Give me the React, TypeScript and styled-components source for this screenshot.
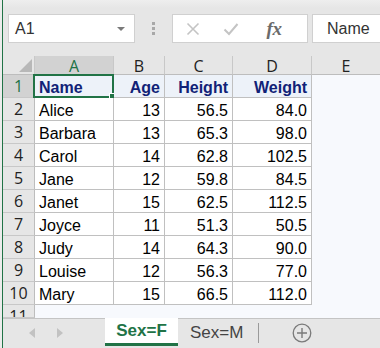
import { Fragment } from 'react'
import styled, { createGlobalStyle } from 'styled-components'

const GREEN = '#217346'

const GlobalStyle = createGlobalStyle`
  html, body {
    margin: 0;
    padding: 0;
    background: #e6e6e6;
  }
  * { box-sizing: border-box; }
`

const Frame = styled.div`
  width: 380px;
  height: 348px;
  overflow: hidden;
  padding-left: 2px;
  background: #ececec;
`

const Window = styled.div`
  height: 100%;
  border-left: 1px solid ${GREEN};
  display: flex;
  flex-direction: column;
  background: #e6e6e6;
  font-family: "Liberation Sans", Arial, sans-serif;
`

const Toolbar = styled.div`
  height: 56px;
  flex: none;
  display: flex;
  align-items: flex-start;
  padding-top: 14px;
  padding-left: 5px;
  background: linear-gradient(#eeeeee 0, #e6e6e6 8px);
`

const NameBox = styled.div`
  width: 127px;
  height: 29px;
  background: #fff;
  border: 1px solid #d0d0d0;
  display: flex;
  align-items: center;
  justify-content: space-between;
  padding: 0 9px 0 6px;
  font-size: 16px;
  color: #333;
`

const Caret = styled.span`
  width: 0;
  height: 0;
  border-left: 4px solid transparent;
  border-right: 4px solid transparent;
  border-top: 4px solid #7a7a7a;
`

const Grip = styled.div`
  width: 37px;
  height: 29px;
  display: flex;
  flex-direction: column;
  align-items: center;
  justify-content: center;
  gap: 2px;
  span {
    width: 3px;
    height: 3px;
    background: #a8a8a8;
  }
`

const FormulaButtons = styled.div`
  width: 136px;
  height: 29px;
  background: #fff;
  border: 1px solid #d0d0d0;
  display: flex;
  align-items: center;
  padding-left: 11px;
`

const IconSlot = styled.span<{ $w: number }>`
  width: ${p => p.$w}px;
  display: flex;
  align-items: center;
  justify-content: center;
`

const Fx = styled.span`
  font-family: "Liberation Serif", "Times New Roman", serif;
  font-style: italic;
  font-weight: bold;
  font-size: 19px;
  color: #6b6b6b;
  letter-spacing: -0.5px;
`

const FormulaInput = styled.div`
  flex: 1;
  height: 29px;
  margin-left: 4px;
  background: #fff;
  border: 1px solid #d0d0d0;
  border-right: none;
  display: flex;
  align-items: center;
  padding-left: 14px;
  font-size: 16px;
  color: #333;
`

const Sheet = styled.div`
  flex: 1;
  display: grid;
  grid-template-columns: 32px 79px 51px 68px 79px 1fr;
  grid-template-rows: 19px repeat(10, 23px) 1fr;
  overflow: hidden;
  background: #f7f9fd;
`

const Corner = styled.div`
  background: #e6e6e6;
  border-right: 1px solid #c8c8c8;
  border-bottom: 1px solid #bdbdbd;
  position: relative;
  &::after {
    content: '';
    position: absolute;
    right: 2px;
    bottom: 2px;
    width: 13px;
    height: 13px;
    background: #b8b8b8;
    clip-path: polygon(100% 0, 100% 100%, 0 100%);
  }
`

const ColHead = styled.div<{ $sel?: boolean; $last?: boolean }>`
  background: ${p => (p.$sel ? '#d2d2d2' : '#e6e6e6')};
  color: ${p => (p.$sel ? GREEN : '#222')};
  border-right: ${p => (p.$last ? 'none' : '1px solid #c8c8c8')};
  border-bottom: 1px solid #bdbdbd;
  font-family: "Open Sans", "Liberation Sans", sans-serif;
  font-size: 16px;
  line-height: 20px;
  text-align: center;
`

const RowHead = styled.div<{ $sel?: boolean }>`
  background: ${p => (p.$sel ? '#d2d2d2' : '#e6e6e6')};
  color: ${p => (p.$sel ? GREEN : '#222')};
  border-right: 1px solid #bdbdbd;
  border-bottom: 1px solid #c8c8c8;
  font-family: "Open Sans", "Liberation Sans", sans-serif;
  font-size: 16px;
  line-height: 21px;
  padding-top: 1px;
  text-align: center;
  overflow: hidden;
`

const Cell = styled.div<{ $head?: boolean; $num?: boolean; $active?: boolean }>`
  position: relative;
  background: ${p => (p.$head ? '#edf2f9' : '#fff')};
  color: ${p => (p.$head ? '#112277' : '#000')};
  font-weight: ${p => (p.$head ? 'bold' : 'normal')};
  text-align: ${p => (p.$num ? 'right' : 'left')};
  border-right: 1px solid #c0c0c0;
  border-bottom: 1px solid #c0c0c0;
  font-size: 16px;
  line-height: 21px;
  padding: 2px 4px 0 4px;
  white-space: nowrap;
  ${p =>
    p.$active &&
    `
    &::before {
      content: '';
      position: absolute;
      left: -2px;
      top: -1px;
      right: -1px;
      bottom: -1px;
      border: 2px solid ${GREEN};
    }
    &::after {
      content: '';
      position: absolute;
      right: -4px;
      bottom: -4px;
      width: 6px;
      height: 6px;
      background: ${GREEN};
      border: 1px solid #fff;
    }
  `}
`

const Blank = styled.div``

const TabBar = styled.div`
  height: 30px;
  flex: none;
  display: flex;
  align-items: stretch;
  background: #e6e6e6;
  border-top: 1px solid #c4c4c4;
`

const Nav = styled.div`
  width: 102px;
  display: flex;
  align-items: center;
  padding-left: 26px;
  gap: 22px;
  padding-bottom: 2px;
`

const Arrow = styled.span<{ $dir: 'left' | 'right' }>`
  width: 0;
  height: 0;
  border-top: 5px solid transparent;
  border-bottom: 5px solid transparent;
  ${p =>
    p.$dir === 'left'
      ? 'border-right: 6px solid #c2c2c2;'
      : 'border-left: 6px solid #c2c2c2;'}
`

const Tab = styled.div<{ $active?: boolean }>`
  width: ${p => (p.$active ? 73 : 80)}px;
  margin-top: ${p => (p.$active ? -1 : 0)}px;
  height: ${p => (p.$active ? 28 : 27)}px;
  background: ${p => (p.$active ? '#fff' : 'transparent')};
  border-bottom: ${p => (p.$active ? `3px solid ${GREEN}` : 'none')};
  color: ${p => (p.$active ? GREEN : '#444')};
  font-weight: ${p => (p.$active ? 'bold' : 'normal')};
  font-size: 17px;
  display: flex;
  align-items: center;
  justify-content: ${p => (p.$active ? 'center' : 'flex-start')};
  padding-left: ${p => (p.$active ? 0 : 12)}px;
  padding-top: 1px;
`

const TabDivider = styled.div`
  width: 1px;
  margin: 4px 0 5px;
  background: #9a9a9a;
`

const AddSheet = styled.div`
  width: 86px;
  display: flex;
  align-items: center;
  justify-content: center;
  padding-bottom: 2px;
`

const cols = ['A', 'B', 'C', 'D', 'E']

const rows: [string, number, number, number][] = [
  ['Alice', 13, 56.5, 84.0],
  ['Barbara', 13, 65.3, 98.0],
  ['Carol', 14, 62.8, 102.5],
  ['Jane', 12, 59.8, 84.5],
  ['Janet', 15, 62.5, 112.5],
  ['Joyce', 11, 51.3, 50.5],
  ['Judy', 14, 64.3, 90.0],
  ['Louise', 12, 56.3, 77.0],
  ['Mary', 15, 66.5, 112.0],
]

export default function App() {
  return (
    <Frame>
      <GlobalStyle />
      <Window>
        <Toolbar>
          <NameBox>
            <span>A1</span>
            <Caret />
          </NameBox>
          <Grip>
            <span />
            <span />
            <span />
          </Grip>
          <FormulaButtons>
            <IconSlot $w={18}>
              <svg width="14" height="14" viewBox="0 0 14 14">
                <path d="M1.5 1.5 L12.5 12.5 M12.5 1.5 L1.5 12.5" stroke="#c4c4c4" strokeWidth="1.6" fill="none" />
              </svg>
            </IconSlot>
            <IconSlot $w={58}>
              <svg width="16" height="14" viewBox="0 0 16 14">
                <path d="M1.5 7.5 L6 12 L14.5 2" stroke="#c4c4c4" strokeWidth="2" fill="none" />
              </svg>
            </IconSlot>
            <IconSlot $w={28}>
              <Fx>fx</Fx>
            </IconSlot>
          </FormulaButtons>
          <FormulaInput>Name</FormulaInput>
        </Toolbar>
        <Sheet>
          <Corner />
          {cols.map((c, i) => (
            <ColHead key={c} $sel={i === 0} $last={c === 'E'}>
              {c}
            </ColHead>
          ))}

          <RowHead $sel>1</RowHead>
          <Cell $head $active>Name</Cell>
          <Cell $head $num>Age</Cell>
          <Cell $head $num>Height</Cell>
          <Cell $head $num>Weight</Cell>
          <Blank />

          {rows.map(([name, age, h, w], i) => (
            <Fragment key={name}>
              <RowHead>{i + 2}</RowHead>
              <Cell>{name}</Cell>
              <Cell $num>{age}</Cell>
              <Cell $num>{h.toFixed(1)}</Cell>
              <Cell $num>{w.toFixed(1)}</Cell>
              <Blank />
            </Fragment>
          ))}

          <RowHead>11</RowHead>
        </Sheet>
        <TabBar>
          <Nav>
            <Arrow $dir="left" />
            <Arrow $dir="right" />
          </Nav>
          <Tab $active>Sex=F</Tab>
          <Tab>Sex=M</Tab>
          <TabDivider />
          <AddSheet>
            <svg width="20" height="20" viewBox="0 0 20 20">
              <circle cx="10" cy="10" r="8.8" stroke="#7a7a7a" strokeWidth="1.3" fill="none" />
              <path d="M10 5 V15 M5 10 H15" stroke="#7a7a7a" strokeWidth="1.4" />
            </svg>
          </AddSheet>
        </TabBar>
      </Window>
    </Frame>
  )
}
